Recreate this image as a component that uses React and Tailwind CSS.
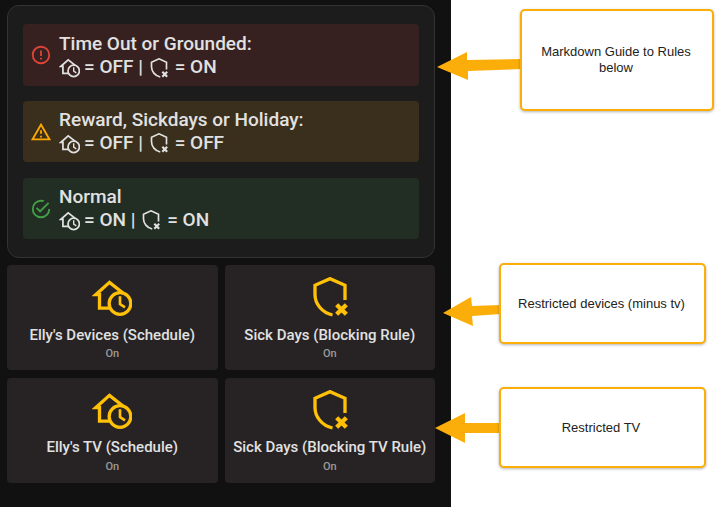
import React from 'react'

const alertCircle = "M11,15H13V17H11V15M11,7H13V13H11V7M12,2C6.47,2 2,6.5 2,12A10,10 0 0,0 12,22A10,10 0 0,0 22,12A10,10 0 0,0 12,2M12,20A8,8 0 0,1 4,12A8,8 0 0,1 12,4A8,8 0 0,1 20,12A8,8 0 0,1 12,20Z"
const alertTriangle = "M12,2L1,21H23M12,6L19.53,19H4.47M11,10V14H13V10M11,16V18H13V16"
const checkCircle = "M20,12A8,8 0 0,1 12,20A8,8 0 0,1 4,12A8,8 0 0,1 12,4C12.76,4 13.5,4.11 14.2,4.31L15.77,2.74C14.61,2.26 13.34,2 12,2A10,10 0 0,0 2,12A10,10 0 0,0 12,22A10,10 0 0,0 22,12M7.91,10.08L6.5,11.5L11,16L21,6L19.59,4.58L11,13.17L7.91,10.08Z"

function HomeClock({ className }) {
  return (
    <svg viewBox="0 0 24 24" className={className} fill="none" stroke="currentColor" strokeWidth="2">
      <path d="M10.5 18.7H4.5V10.6H2.2L10.5 3.2L18.6 9.6" />
      <circle cx="16.8" cy="15.9" r="6.5" fill="none" />
      <path d="M16.8 11.6V16.2L19.8 18.2" strokeWidth="1.6" />
    </svg>
  )
}

function ShieldX({ className }) {
  return (
    <svg viewBox="0 0 24 24" className={className} fill="none" stroke="currentColor" strokeWidth="2">
      <path d="M13.5 22.8C7 21.3 3 16 3 10.5V5L12 1L21 5V13.8" />
      <path d="M16 16.6L21.8 22.4M21.8 16.6L16 22.4" strokeWidth="2.6" />
    </svg>
  )
}

function Alert({ height, bg, color, icon, title, first, second, textClass }) {
  return (
    <div className={`flex items-center rounded-[4px] pl-[7px] ${height} ${bg}`}>
      <svg viewBox="0 0 24 24" className={`w-[22px] h-[22px] shrink-0 ${color}`} fill="currentColor">
        <path d={icon} />
      </svg>
      <div className={`ml-[7px] text-[19px] leading-[23px] font-medium text-[#e1e1e1] ${textClass}`}>
        <div>{title}</div>
        <div className="flex items-center">
          <HomeClock className="w-[21px] h-[21px] mr-[4px] mt-[2px]" />
          <span>= {first} |&nbsp;</span>
          <ShieldX className="w-[20px] h-[20px] ml-[1px] mr-[6px] mt-[2px]" />
          <span>= {second}</span>
        </div>
      </div>
    </div>
  )
}

function Tile({ icon: Icon, name, labelGap }) {
  return (
    <div className="flex-1 h-[105px] rounded-[4px] bg-[#272324] flex flex-col items-center pt-[12px]">
      <Icon className="w-[40px] h-[40px] text-[#ffc107]" />
      <div className={`text-[15px] leading-[20px] font-medium text-[#e1e1e1] ${labelGap}`}>{name}</div>
      <div className="text-[11px] leading-[15px] font-medium text-[#9b9b9b]">On</div>
    </div>
  )
}

function Callout({ className, children }) {
  return (
    <div className={`absolute flex items-center justify-center text-center bg-white border-[2px] border-[#fbae0a] rounded-[5px] shadow-[0_1px_3px_rgba(0,0,0,0.3)] text-[13px] leading-[16px] text-[#222] font-['Liberation_Sans',sans-serif] ${className}`}>
      {children}
    </div>
  )
}

export default function App() {
  return (
    <div className="relative w-[716px] h-[507px] bg-white overflow-hidden font-['Roboto',sans-serif]">
      <div className="w-[451px] h-[507px] bg-[#111111] pl-[7px] pr-[16px] pt-[5px]">
        <div className="h-[253px] rounded-[12px] border border-[#333333] bg-[#1c1c1c] px-[15px] pt-[18px] flex flex-col gap-[15px]">
          <Alert height="h-[62px]" bg="bg-[#362120]" color="text-[#db4437]" icon={alertCircle} title="Time Out or Grounded:" first="OFF" second="ON" textClass="" />
          <Alert height="h-[61px]" bg="bg-[#3a2e1c]" color="text-[#ffa600]" icon={alertTriangle} title="Reward, Sickdays or Holiday:" first="OFF" second="OFF" textClass="-mt-[2px]" />
          <Alert height="h-[61px] mt-[1px]" bg="bg-[#222e23]" color="text-[#43a047]" icon={checkCircle} title="Normal" first="ON" second="ON" textClass="-mt-[2px]" />
        </div>
        <div className="mt-[7px] flex gap-[7px]">
          <Tile labelGap="mt-[8px] mb-[1px]" icon={HomeClock} name="Elly's Devices (Schedule)" />
          <Tile labelGap="mt-[8px] mb-[1px]" icon={ShieldX} name="Sick Days (Blocking Rule)" />
        </div>
        <div className="mt-[8px] flex gap-[7px]">
          <Tile labelGap="mt-[7px] mb-[2px]" icon={HomeClock} name="Elly's TV (Schedule)" />
          <Tile labelGap="mt-[7px] mb-[2px]" icon={ShieldX} name="Sick Days (Blocking TV Rule)" />
        </div>
      </div>

      {/* annotations drawn over the screenshot */}
      <svg className="absolute left-0 top-0" width="716" height="507" fill="#fbae0a">
        <polygon points="437,67 467,52 467,60 522,59 522,69 468,71 468,80" />
        <polygon points="443,313 471,297 472,306 501,305 501,314 472,316 473,326" />
        <polygon points="435,428 465,413 465,423 501,423 501,433 465,433 465,443" />
      </svg>
      <Callout className="left-[520px] top-[9px] w-[194px] h-[102px] pl-[10px] pr-[12px]">Markdown Guide to Rules below</Callout>
      <Callout className="left-[499px] top-[263px] w-[207px] h-[81px] pr-[2px]">Restricted devices (minus tv)</Callout>
      <Callout className="left-[499px] top-[387px] w-[207px] h-[81px] pr-[3px]">Restricted TV</Callout>
    </div>
  )
}
